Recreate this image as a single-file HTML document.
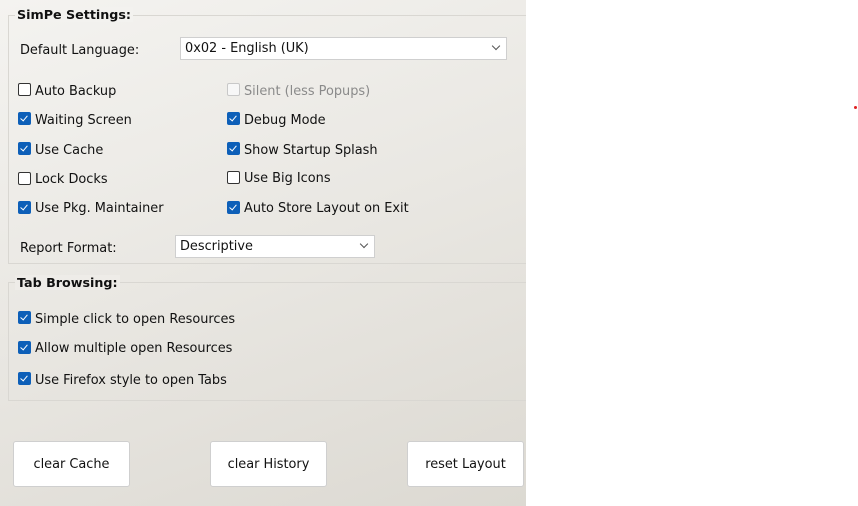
<!DOCTYPE html>
<html><head><style>
body{margin:0;width:858px;height:506px;background:#fff;position:relative;overflow:hidden;font-family:"DejaVu Sans","Liberation Sans",sans-serif;font-size:12.9px;color:#111}
#p{position:absolute;left:0;top:0;width:526px;height:506px;overflow:hidden;background:linear-gradient(160deg,#f4f3f0 0%,#e9e7e2 50%,#dcd9d2 100%)}
.a{position:absolute;white-space:nowrap;margin-top:1px}
.gb{position:absolute;border:1px solid #d9d7d2;border-right:none}
.t{position:absolute;font-weight:bold;font-size:12.7px;white-space:nowrap}
.cb{position:absolute;width:11px;height:11px;border:1px solid #333;border-radius:2px;background:#fff}
.ck{position:absolute;width:13px;height:13px;border-radius:2px;background:#0d5fb8}
.ck:after{content:"";position:absolute;left:4px;top:2px;width:3px;height:6px;border:solid #fff;border-width:0 1px 1px 0;transform:rotate(40deg)}
.dis{border-color:#c8c8c8;background:#f7f7f7}
.sel{position:absolute;background:#fff;border:1px solid #cfcfcf;box-sizing:border-box;padding:3px 4px}
.arr{position:absolute;right:7px;top:5px;width:5px;height:5px;border:solid #555;border-width:0 1px 1px 0;transform:rotate(45deg)}
.btn{position:absolute;top:441px;height:46px;background:#fff;border:1px solid #cfcfcf;border-radius:3px;box-sizing:border-box;text-align:center;line-height:45px}
</style></head><body>
<div id="p">
<div class="gb" style="left:8px;top:15px;width:520px;height:247px"></div>
<div class="t" style="left:15px;top:7px;background:#f3f2ef;padding:0 2px">SimPe Settings:</div>
<div class="a" style="left:20px;top:42px">Default Language:</div>
<div class="sel" style="left:180px;top:37px;width:327px;height:23px">0x02 - English (UK)<div class="arr"></div></div>

<div class="cb" style="left:18px;top:83px"></div><div class="a" style="left:35px;top:83px">Auto Backup</div>
<div class="cb dis" style="left:227px;top:83px"></div><div class="a" style="left:244px;top:83px;color:#8a8a8a">Silent (less Popups)</div>
<div class="ck" style="left:18px;top:112px"></div><div class="a" style="left:35px;top:112px">Waiting Screen</div>
<div class="ck" style="left:227px;top:112px"></div><div class="a" style="left:244px;top:112px">Debug Mode</div>
<div class="ck" style="left:18px;top:142px"></div><div class="a" style="left:35px;top:142px">Use Cache</div>
<div class="ck" style="left:227px;top:142px"></div><div class="a" style="left:244px;top:142px">Show Startup Splash</div>
<div class="cb" style="left:18px;top:172px"></div><div class="a" style="left:35px;top:171px">Lock Docks</div>
<div class="cb" style="left:227px;top:171px"></div><div class="a" style="left:244px;top:170px">Use Big Icons</div>
<div class="ck" style="left:18px;top:201px"></div><div class="a" style="left:35px;top:200px">Use Pkg. Maintainer</div>
<div class="ck" style="left:227px;top:201px"></div><div class="a" style="left:244px;top:200px">Auto Store Layout on Exit</div>
<div class="a" style="left:20px;top:240px">Report Format:</div>
<div class="sel" style="left:175px;top:235px;width:200px;height:23px">Descriptive<div class="arr"></div></div>

<div class="gb" style="left:8px;top:282px;width:520px;height:117px"></div>
<div class="t" style="left:15px;top:275px;background:#eeece8;padding:0 2px">Tab Browsing:</div>
<div class="ck" style="left:18px;top:311px"></div><div class="a" style="left:35px;top:311px">Simple click to open Resources</div>
<div class="ck" style="left:18px;top:341px"></div><div class="a" style="left:35px;top:340px">Allow multiple open Resources</div>
<div class="ck" style="left:18px;top:372px"></div><div class="a" style="left:35px;top:372px">Use Firefox style to open Tabs</div>

<div class="btn" style="left:13px;width:117px">clear Cache</div>
<div class="btn" style="left:210px;width:117px">clear History</div>
<div class="btn" style="left:407px;width:117px">reset Layout</div>
</div>
<div style="position:absolute;left:854px;top:106px;width:3px;height:3px;border-radius:50%;background:#e02020"></div>
</body></html>
